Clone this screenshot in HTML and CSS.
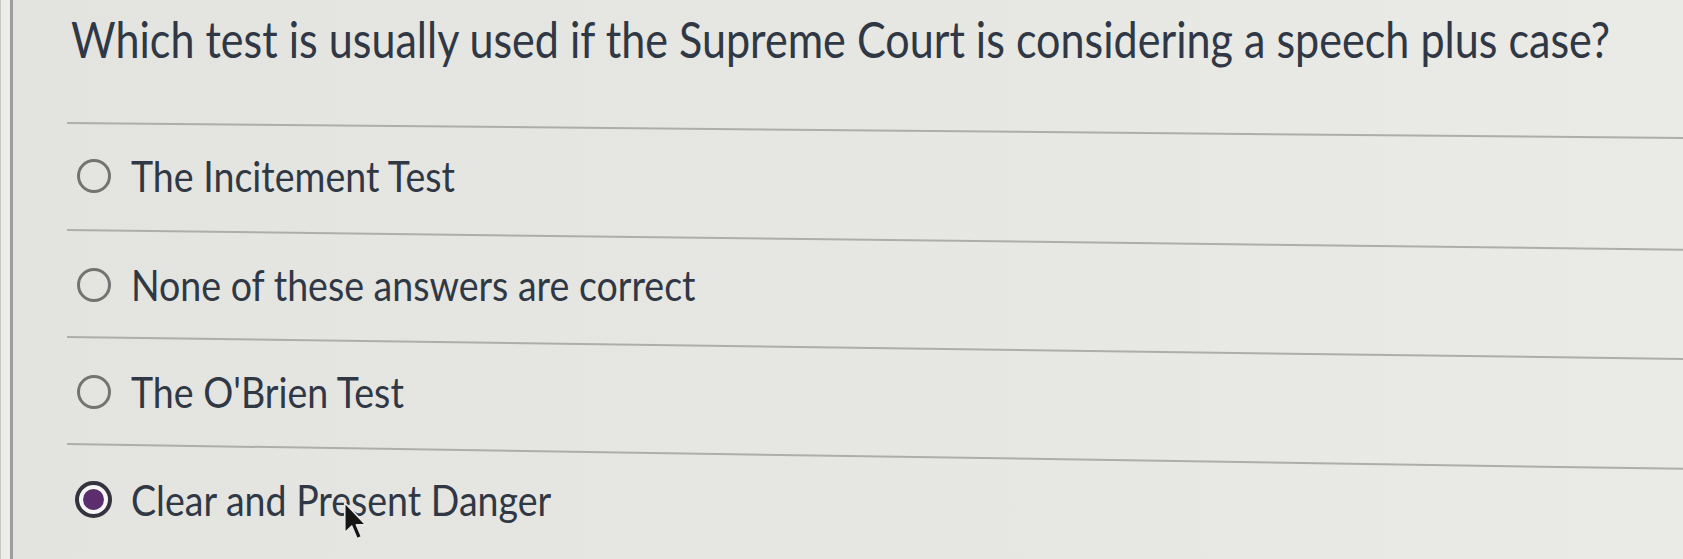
FILE: index.html
```html
<!DOCTYPE html>
<html lang="en">
<head>
<meta charset="utf-8">
<title>Quiz question</title>
<link rel="stylesheet" href="styles.css">
</head>
<body>
<div class="frame">
  <div class="edge"></div>
  <div class="main">
    <h1 class="question"><span class="qtext">Which test is usually used if the Supreme Court is considering a speech plus case?</span></h1>
    <ul class="answers">
      <li class="answer a1"><span class="rule"></span><span class="radio"></span><span class="label">The Incitement Test</span></li>
      <li class="answer a2"><span class="rule"></span><span class="radio"></span><span class="label">None of these answers are correct</span></li>
      <li class="answer a3"><span class="rule"></span><span class="radio"></span><span class="label">The O'Brien Test</span></li>
      <li class="answer a4"><span class="rule"></span><span class="radio checked"></span><span class="label">Clear and Present Danger</span>
        <svg class="cursor" width="27" height="42" viewBox="0 0 16 25"><path d="M1 1 L1 19 L5.2 15 L8.3 22.5 L11 21.3 L8 14.2 L13.6 14.2 Z" fill="#151515" stroke="#e8e8e8" stroke-width="1" stroke-linejoin="round"/></svg>
      </li>
    </ul>
  </div>
</div>
</body>
</html>
```

FILE: styles.css
```css
html, body {
  margin: 0;
  padding: 0;
  height: 100%;
}
body {
  background: linear-gradient(90deg, #e3e3df 0%, #e6e6e2 50%, #eaeae7 100%);
  font-family: Lato, "Noto Sans", sans-serif;
  color: #2f3844;
  overflow: hidden;
}
.frame {
  display: flex;
  height: 559px;
  overflow: hidden;
}
.edge {
  width: 9px;
  flex: none;
  background: #ecece9;
  border-left: 1px solid #c9c9c6;
  border-right: 3px solid #9d9d9d;
}
.main {
  flex: 1;
  min-width: 0;
  padding-left: 54px;
  overflow: hidden;
}
.question {
  margin: 0;
  padding: 12px 0 0 4px;
  font-size: 51px;
  font-weight: 400;
  line-height: 54px;
  height: 105px;
  box-sizing: border-box;
  white-space: nowrap;
}
.qtext {
  display: inline-block;
  transform: scaleX(0.845);
  transform-origin: left center;
}
.answers {
  list-style: none;
  margin: 0;
  padding: 0;
}
.answer {
  position: relative;
  height: 107px;
  display: flex;
  align-items: center;
  padding-left: 10px;
  box-sizing: border-box;
}
.rule {
  position: absolute;
  left: 0;
  right: -40px;
  top: 17px;
  height: 2px;
  background: #adadab;
  transform-origin: left center;
}
.a1 .rule { transform: rotate(0.53deg); }
.a2 .rule { transform: rotate(0.7deg); }
.a3 .rule { transform: rotate(0.78deg); }
.a4 .rule { transform: rotate(0.88deg); }
.a1 { padding-top: 34px; }
.a2 { padding-top: 38px; }
.a3 { padding-top: 38px; }
.a4 { padding-top: 40px; }
.radio {
  width: 34px;
  height: 34px;
  box-sizing: border-box;
  border-radius: 50%;
  border: 3px solid #737373;
  flex: none;
  margin-right: 20px;
}
.radio.checked {
  width: 37px;
  height: 37px;
  margin-left: -2px;
  margin-right: 19px;
  border: 4px solid #34333e;
  background: #f6f6f6;
  display: flex;
  align-items: center;
  justify-content: center;
}
.radio.checked::after {
  content: "";
  width: 21px;
  height: 21px;
  border-radius: 50%;
  background: #5d2e6d;
}
.label {
  display: inline-block;
  font-size: 43px;
  line-height: 50px;
  white-space: nowrap;
  transform: scaleX(0.873);
  transform-origin: left center;
}
.cursor {
  position: absolute;
  left: 276px;
  top: 75px;
}
```
